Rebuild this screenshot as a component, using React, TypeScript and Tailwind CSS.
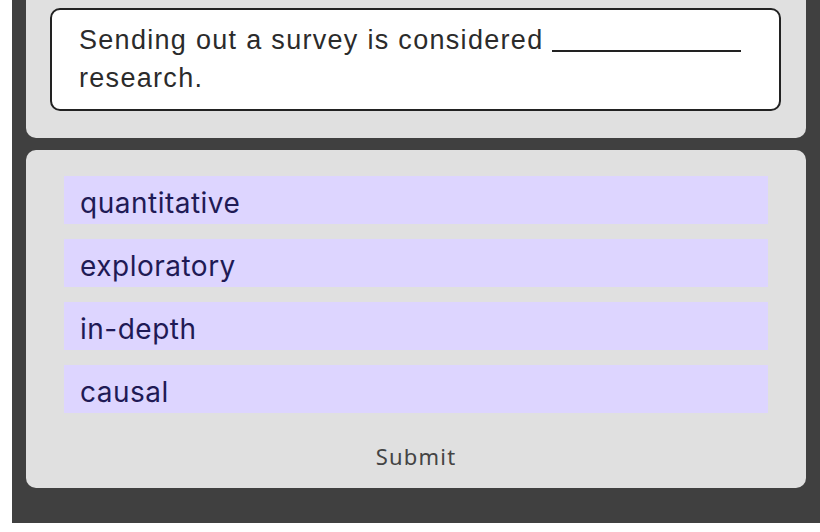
const options = ["quantitative", "exploratory", "in-depth", "causal"];

export default function App() {
  return (
    <div className="h-[532px] w-[820px] overflow-hidden bg-white">
      <div className="ml-[12px] flex h-[523px] flex-col gap-[12px] bg-[#404040] pl-[14px] pr-[14px]">
        <div className="rounded-b-[10px] bg-[#e0e0e0] pb-[27px] pl-[24px] pr-[25px] pt-[8px]">
          <div className="rounded-[10px] border-2 border-[#222] bg-white pb-[12px] pl-[27px] pr-[20px] pt-[11px] font-['Liberation_Sans',Arial,sans-serif] text-[27px] leading-[38px] tracking-[1.3px] text-[#2b2b2b]">
            Sending out a survey is considered{" "}
            <span className="inline-block w-[189px] border-b-2 border-[#222] align-baseline leading-[20px]">&nbsp;</span>{" "}
            research.
          </div>
        </div>
        <div className="flex h-[338px] flex-col rounded-[10px] bg-[#e0e0e0] px-[38px] pt-[26px]">
          <div className="flex flex-col gap-[15px]">
            {options.map((o) => (
              <button
                key={o}
                className="flex h-[48px] items-center bg-[#ddd5ff] pl-[16px] pt-[6px] text-left font-['Inter',sans-serif] text-[28px] tracking-[0.5px] text-[#1f1a55]"
              >
                {o}
              </button>
            ))}
          </div>
          <button className="mx-auto mt-[27px] font-['Noto_Sans',sans-serif] text-[22px] tracking-[1.2px] text-[#444]">
            Submit
          </button>
        </div>
      </div>
    </div>
  );
}
